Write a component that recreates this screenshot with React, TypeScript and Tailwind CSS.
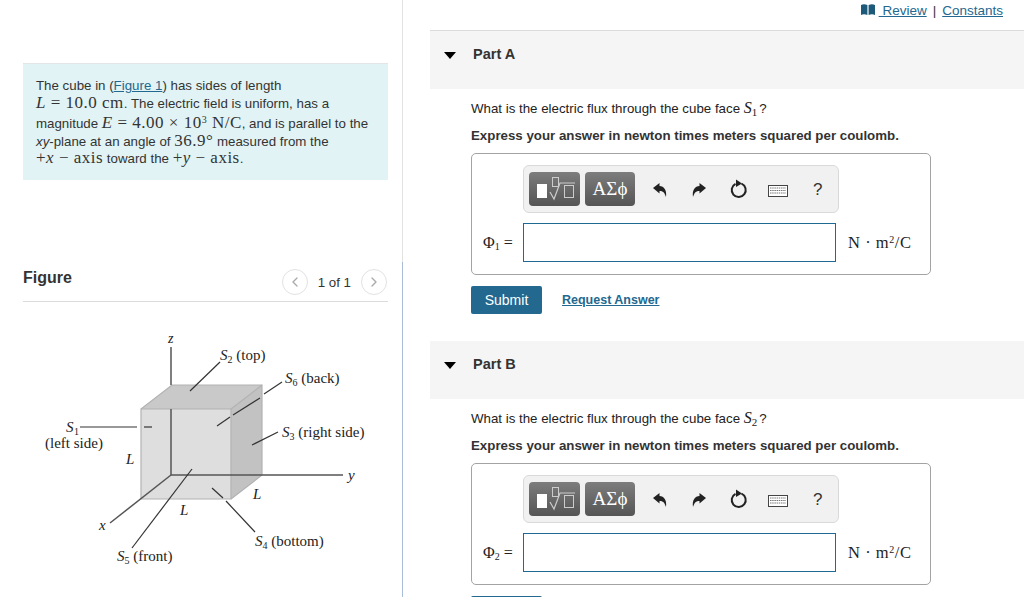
import { ChevronLeft, ChevronRight } from "lucide-react";

const serif = "font-['Liberation_Serif',serif]";

function M({ children }: { children: React.ReactNode }) {
  return <span className={`${serif} text-[17px] tracking-[0.5px]`}>{children}</span>;
}

function BookIcon() {
  return (
    <svg width="14" height="11" viewBox="0 0 14 11" className="mr-1">
      <path d="M0 1 C2 0 4 0 6.4 1 V11 C4 10 2 10 0 11 Z" fill="#1d5a7a" />
      <path d="M14 1 C12 0 10 0 7.6 1 V11 C10 10 12 10 14 11 Z" fill="#1d5a7a" />
    </svg>
  );
}

function CubeFigure() {
  return (
    <svg width="350" height="240" viewBox="0 0 350 240" className="ml-[30px] mt-[28px]">
      {/* cube faces */}
      <polygon points="111,79 201,79 232,55 142,55" fill="#c9c9c9" />
      <polygon points="201,79 232,55 232,145 201,169" fill="#c2c2c2" />
      <polygon points="111,79 201,79 201,169 111,169" fill="#dedede" />
      <g fill="none" stroke="#b2b2b2" strokeWidth="1.2">
        <path d="M111 79 H201 V169 H111 Z" />
        <path d="M111 79 L142 55 H232 V145 L201 169" />
        <path d="M201 79 L232 55" />
      </g>
      {/* axes */}
      <g stroke="#555" strokeWidth="1.5" fill="none">
        <path d="M141 17 V55" />
        <path d="M141 79 V145" />
        <path d="M141 145 H313" />
        <path d="M141 145 L80 193" />
      </g>
      {/* leader lines */}
      <g stroke="#333" strokeWidth="1.2" fill="none">
        <path d="M190 32 L160 61" />
        <path d="M50 97 H107" />
        <path d="M114 97 H122" />
        <path d="M252 52 L234 64" />
        <path d="M230 68 L203 85" />
        <path d="M200 87 L187 96" />
        <path d="M248 102 L222 115" />
        <path d="M162 139 L102 218" />
        <path d="M182 158 L193 168" />
        <path d="M196 171 L225 202" />
      </g>
      <g fontFamily="'Liberation Serif', serif" fontSize="15" fill="#222">
        <text x="138" y="13" fontStyle="italic" fontSize="14">z</text>
        <text x="190" y="30">
          <tspan fontStyle="italic">S</tspan>
          <tspan fontSize="10" dy="3">2</tspan>
          <tspan dy="-3"> (top)</tspan>
        </text>
        <text x="255" y="53">
          <tspan fontStyle="italic">S</tspan>
          <tspan fontSize="10" dy="3">6</tspan>
          <tspan dy="-3"> (back)</tspan>
        </text>
        <text x="252" y="107">
          <tspan fontStyle="italic">S</tspan>
          <tspan fontSize="10" dy="3">3</tspan>
          <tspan dy="-3"> (right side)</tspan>
        </text>
        <text x="36" y="102" fontStyle="italic">S</text>
        <text x="44" y="105" fontSize="10">1</text>
        <text x="15" y="118">(left side)</text>
        <text x="96" y="134" fontStyle="italic">L</text>
        <text x="318" y="150" fontStyle="italic">y</text>
        <text x="223" y="169" fontStyle="italic">L</text>
        <text x="150" y="185" fontStyle="italic">L</text>
        <text x="69" y="200" fontStyle="italic">x</text>
        <text x="225" y="216">
          <tspan fontStyle="italic">S</tspan>
          <tspan fontSize="10" dy="3">4</tspan>
          <tspan dy="-3"> (bottom)</tspan>
        </text>
        <text x="87" y="231">
          <tspan fontStyle="italic">S</tspan>
          <tspan fontSize="10" dy="3">5</tspan>
          <tspan dy="-3"> (front)</tspan>
        </text>
      </g>
    </svg>
  );
}

function Toolbar() {
  return (
    <div className="ml-[51px] flex h-[48px] w-[316px] items-center rounded-md border border-[#d9d9d9] bg-[#f1f1f1] pl-[5px]">
      <div className="h-[34px] w-[51px] rounded-[4px] bg-gradient-to-b from-[#7d7d7d] to-[#555]">
        <svg width="51" height="34" viewBox="0 0 51 34" fill="none">
          <rect x="8" y="12" width="10" height="14" fill="#fff" />
          <rect x="23.5" y="5.5" width="6" height="9" stroke="#ccc" />
          <path d="M21 20 L25 27 L31 11 H46" stroke="#ccc" strokeWidth="1.2" />
          <rect x="35.5" y="13.5" width="9" height="12" stroke="#ccc" />
        </svg>
      </div>
      <div className={`ml-[5px] flex h-[34px] w-[50px] items-center justify-center rounded-[4px] bg-gradient-to-b from-[#7d7d7d] to-[#555] text-[19px] text-white ${serif}`}>
        ΑΣϕ
      </div>
      <svg width="14" height="14" viewBox="0 0 14 14" className="ml-[18px] mt-[2px]">
        <path d="M0 5 L6.5 0 V3 C11 3 14 7 13 14 C11.5 9.5 10 8 6.5 8 V10.5 Z" fill="#222" />
      </svg>
      <svg width="14" height="14" viewBox="0 0 14 14" className="ml-[25px] mt-[2px]">
        <path d="M14 5 L7.5 0 V3 C3 3 0 7 1 14 C2.5 9.5 4 8 7.5 8 V10.5 Z" fill="#222" />
      </svg>
      <svg width="18" height="20" viewBox="0 0 18 20" className="ml-[24px]" fill="none">
        <path d="M11.5 4.6 A7 7 0 1 1 5.5 4.8" stroke="#222" strokeWidth="2" />
        <path d="M6 0.5 L12 4.5 L6 8 Z" fill="#222" />
      </svg>
      <svg width="20" height="12" viewBox="0 0 20 12" className="ml-[20px] mt-[3px]" fill="none">
        <rect x="0.5" y="0.5" width="19" height="11" fill="#fff" stroke="#444" />
        <path d="M2 3 H18 M2 5.5 H18 M2 8 H18" stroke="#777" strokeWidth="1.2" strokeDasharray="1.5 .7" />
      </svg>
      <span className="ml-[25px] mt-[2px] text-[17px] text-[#333]">?</span>
    </div>
  );
}

function Part({ name, n, actions }: { name: string; n: string; actions: boolean }) {
  return (
    <section>
      <div className="ml-[27px] flex h-[58px] items-center bg-[#f5f5f5] pb-[10px]">
        <span className="ml-[14px] h-0 w-0 border-x-[6px] border-t-[7px] border-x-transparent border-t-black" />
        <span className="ml-[17px] text-[14.5px] font-bold text-[#333]">{name}</span>
      </div>
      <div className="pl-[68px]">
        <p className="mt-[9px] h-[20px] text-[13.3px] leading-[20px] text-[#222]">
          What is the electric flux through the cube face{" "}
          <span className={`${serif} text-[16px] italic`}>S</span>
          <sub className={`${serif} text-[11px]`}>{n}</sub>
          <span className="ml-[2px]">?</span>
        </p>
        <p className="mt-[8px] h-[20px] text-[13.3px] font-bold leading-[20px] text-[#333]">
          Express your answer in newton times meters squared per coulomb.
        </p>
        <div className="mt-[7px] h-[122px] w-[460px] rounded-[5px] border border-[#a3a3a3] pt-[11px]">
          <Toolbar />
          <div className="mt-[10px] flex items-center">
            <span className={`ml-[11px] w-[40px] text-[16px] text-[#222] ${serif}`}>
              Φ<sub className="text-[10px]">{n}</sub> =
            </span>
            <div className="h-[39px] w-[313px] border border-[#1f6a93]" />
            <span className={`ml-[12px] mt-[1px] text-[16.5px] tracking-[0.55px] text-[#222] ${serif}`}>
              N · m<sup className="text-[10px]">2</sup>/C
            </span>
          </div>
        </div>
        {actions ? (
          <div className="mt-[11px] flex h-[28px] items-center">
            <button className="h-[28px] w-[71px] rounded-[2px] bg-[#23688f] text-[14px] text-white">Submit</button>
            <a className="ml-[20px] text-[12.5px] font-bold text-[#23688f] underline">Request Answer</a>
          </div>
        ) : (
          <div className="mt-[11px] h-[28px] w-[71px] rounded-[2px] bg-[#23688f]" />
        )}
      </div>
    </section>
  );
}

export default function App() {
  return (
    <div className="flex h-[597px] w-[1024px] overflow-hidden bg-white font-['Liberation_Sans',sans-serif]">
      {/* left column */}
      <div className="flex w-[403px] shrink-0 flex-col">
        <div className="h-[262px] border-r border-r-[#e2e2e2] pt-[63px]">
          <div className="ml-[23px] h-[117px] w-[365px] border-t border-[#e3e6e6] bg-[#e1f3f5] pl-[13px] pt-[13px] text-[13.3px] text-[#333]">
            <div className="h-[17px] leading-[18px]">
              The cube in (<a className="text-[#23688f] underline">Figure 1</a>) has sides of length
            </div>
            <div className="h-[18px] leading-[18px]">
              <M>
                <i>L</i> = 10.0 cm
              </M>
              . The electric field is uniform, has a
            </div>
            <div className="mt-[2px] h-[18px] leading-[18px]">
              magnitude{" "}
              <M>
                <i>E</i> = 4.00 × 10<sup className="text-[10px]">3</sup> N/C
              </M>
              , and is parallel to the
            </div>
            <div className="h-[17px] leading-[18px]">
              <i>xy</i>-plane at an angle of <M>36.9°</M> measured from the
            </div>
            <div className="h-[18px] leading-[18px]">
              <M>
                +<i>x</i> − axis
              </M>{" "}
              toward the{" "}
              <M>
                +<i>y</i> − axis
              </M>
              .
            </div>
          </div>
        </div>
        <div className="flex-1 border-r border-r-[#a9bcd8]">
          <div className="ml-[23px] flex h-[40px] w-[365px] items-start justify-between border-b border-[#dcdcdc] pr-[1px]">
            <span className="text-[16px] font-bold leading-[31px] text-[#333]">Figure</span>
            <div className="mt-[7px] flex items-center text-[13.3px] text-[#333]">
              <span className="flex h-[26px] w-[26px] items-center justify-center rounded-full border border-[#e2e2e2]">
                <ChevronLeft size={16} color="#aaa" />
              </span>
              <span className="mx-[10px] mt-[2px]">1 of 1</span>
              <span className="flex h-[26px] w-[26px] items-center justify-center rounded-full border border-[#e2e2e2]">
                <ChevronRight size={16} color="#aaa" />
              </span>
            </div>
          </div>
          <CubeFigure />
        </div>
      </div>

      {/* right column */}
      <div className="flex-1">
        <div className="ml-[27px] flex h-[31px] items-start justify-end border-b border-[#dcdcdc] pr-[21px] pt-[1px] text-[13.5px] text-[#23688f]">
          <span className="mt-[3px]">
            <BookIcon />
          </span>
          <a className="underline">&nbsp;Review</a>
          <span className="mx-[6px] text-[#333]">|</span>
          <a className="underline">Constants</a>
        </div>
        <Part name="Part A" n="1" actions />
        <div className="h-[27px]" />
        <Part name="Part B" n="2" actions={false} />
      </div>
    </div>
  );
}
